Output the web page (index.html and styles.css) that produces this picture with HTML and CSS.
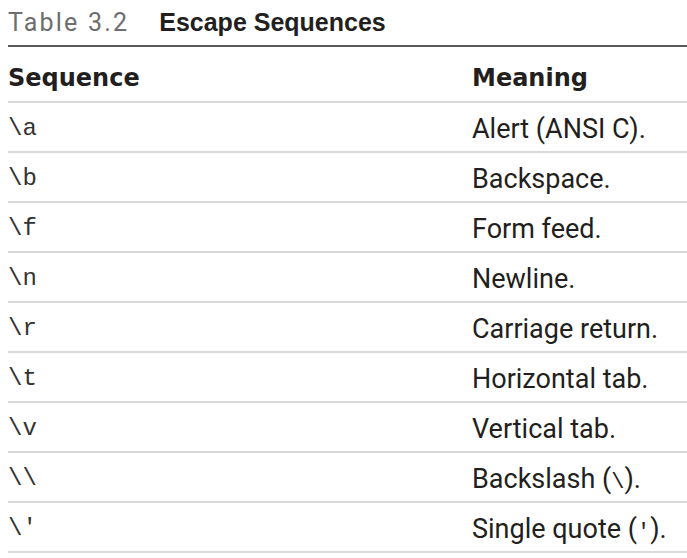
FILE: index.html
```html
<!DOCTYPE html>
<html>
<head>
<meta charset="utf-8">
<link rel="stylesheet" href="styles.css">
</head>
<body>
<div class="wrap">
  <div class="caption"><span class="num">Table 3.2</span><span class="title">Escape Sequences</span></div>
  <div class="table">
    <div class="row head"><div class="c1">Sequence</div><div class="c2">Meaning</div></div>
    <div class="row"><div class="c1 code">\a</div><div class="c2">Alert (ANSI C).</div></div>
    <div class="row"><div class="c1 code">\b</div><div class="c2">Backspace.</div></div>
    <div class="row"><div class="c1 code">\f</div><div class="c2">Form feed.</div></div>
    <div class="row"><div class="c1 code">\n</div><div class="c2">Newline.</div></div>
    <div class="row"><div class="c1 code">\r</div><div class="c2">Carriage return.</div></div>
    <div class="row"><div class="c1 code">\t</div><div class="c2">Horizontal tab.</div></div>
    <div class="row"><div class="c1 code">\v</div><div class="c2">Vertical tab.</div></div>
    <div class="row"><div class="c1 code">\\</div><div class="c2">Backslash (<span class="ic">\</span>).</div></div>
    <div class="row"><div class="c1 code">\'</div><div class="c2">Single quote (<span class="ic">'</span>).</div></div>
  </div>
</div>
</body>
</html>
```
FILE: styles.css
```css
html, body { margin: 0; padding: 0; background: #fff; }
.wrap { padding-left: 8px; font-family: Roboto, "Liberation Sans", sans-serif; color: #231f20; }
.caption { height: 47px; border-bottom: 2px solid #58595b; display: flex; align-items: flex-end; box-sizing: border-box; padding-bottom: 9px; font-size: 25px; line-height: 27px; }
.num { color: #6d6e70; letter-spacing: 2.2px; margin-right: 30px; }
.title { font-weight: bold; font-family: "Liberation Sans", Arial, sans-serif; }
.row { display: flex; height: 50px; border-bottom: 2px solid #d9d9d9; box-sizing: border-box; align-items: center; font-size: 27px; padding-top: 3px; }
.head { height: 56px; font-weight: bold; font-size: 24px; padding-top: 8px; font-family: "DejaVu Sans", "Liberation Sans", sans-serif; }
.c1 { width: 464px; }
.code { font-family: "Liberation Mono", "Courier New", monospace; font-size: 24px; color: #333; }
.ic { font-family: "Liberation Mono", "Courier New", monospace; font-size: 22px; }
```
